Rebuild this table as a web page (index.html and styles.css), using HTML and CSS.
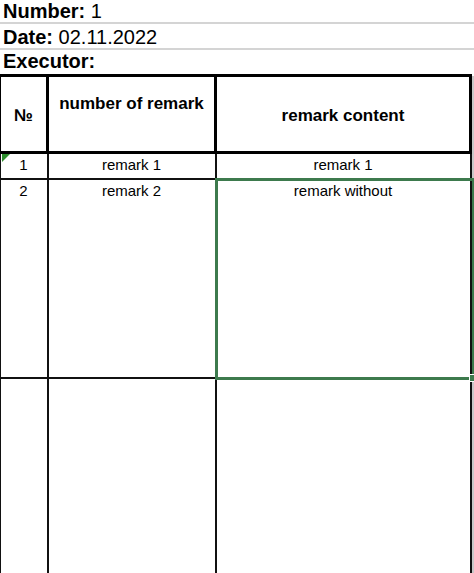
FILE: index.html
```html
<!DOCTYPE html>
<html>
<head>
<meta charset="utf-8">
<link rel="stylesheet" href="styles.css">
</head>
<body>
<div class="sheet">
  <div class="info-row"><b>Number:</b> 1</div>
  <div class="info-row"><b>Date:</b> 02.11.2022</div>
  <div class="info-row last"><b>Executor:</b></div>
  <div class="grid-wrap">
    <table class="grid">
      <colgroup>
        <col class="c1"><col class="c2"><col class="c3"><col class="c4">
      </colgroup>
      <thead>
        <tr class="head">
          <th class="h-mid">№</th>
          <th class="h-top">number of remark</th>
          <th class="h-mid">remark content</th>
          <th class="gap"></th>
        </tr>
      </thead>
      <tbody>
        <tr class="r1">
          <td class="num"><span class="flag"></span>1</td>
          <td>remark 1</td>
          <td>remark 1</td>
          <td class="gap"></td>
        </tr>
        <tr class="r2">
          <td>2</td>
          <td>remark 2</td>
          <td class="sel">remark without<span class="selbox"><span class="handle"></span></span></td>
          <td class="gap"></td>
        </tr>
        <tr class="r3">
          <td></td>
          <td></td>
          <td></td>
          <td class="gap"></td>
        </tr>
      </tbody>
    </table>
  </div>
</div>
</body>
</html>
```

FILE: styles.css
```css
html, body {
  margin: 0;
  padding: 0;
  background: #fff;
}
body {
  font-family: "Liberation Sans", Arial, sans-serif;
  color: #000;
  width: 474px;
  height: 573px;
  overflow: hidden;
}
.sheet {
  display: flex;
  flex-direction: column;
}
.info-row {
  height: 24px;
  line-height: 22px;
  font-size: 20px;
  padding-left: 3px;
  border-bottom: 2px solid #d4d4d4;
  box-sizing: border-box;
  white-space: nowrap;
}
.info-row + .info-row {
  height: 26px;
  line-height: 26px;
}
.info-row.last {
  border-bottom: none;
  height: 24px;
  line-height: 22px;
}
.grid-wrap {
  margin-left: -2px;
}
.grid {
  border-collapse: collapse;
  table-layout: fixed;
  width: 478px;
}
.c1 { width: 48px; }
.c2 { width: 168px; }
.c3 { width: 255px; }
.c4 { width: 7px; }
.grid th, .grid td {
  padding: 0;
  text-align: center;
  border: 2px solid #111;
}
.head { height: 77px; }
.head th {
  border: 3px solid #000;
  font-size: 17px;
  font-weight: bold;
  line-height: 20px;
}
.h-mid { vertical-align: middle; padding-top: 4px !important; }
.h-top { vertical-align: top; padding-top: 17px !important; }
.grid td {
  font-size: 15px;
  vertical-align: top;
  line-height: 20px;
}
.r1 { height: 26px; }
.r1 td { padding-top: 1px; }
.r2 { height: 199px; }
.r2 td { padding-top: 1px; }
.r3 { height: 200px; }
.grid .gap {
  background: #c8c8c8;
  border: none;
  border-left: 3px solid #000;
}
.grid tbody .gap { border-left-width: 2px; }
.num { position: relative; }
.flag {
  position: absolute;
  left: 1px;
  top: 0;
  width: 0;
  height: 0;
  border-top: 8px solid #2f8f2f;
  border-right: 8px solid transparent;
}
.sel { position: relative; }
.selbox {
  position: absolute;
  left: -2px;
  top: -2px;
  right: -5px;
  bottom: -3px;
  border: 3px solid #3d7a4d;
}
.handle {
  position: absolute;
  right: -5px;
  bottom: -5px;
  width: 6px;
  height: 6px;
  background: #3d7a4d;
  border: 1px solid #fff;
}
```
